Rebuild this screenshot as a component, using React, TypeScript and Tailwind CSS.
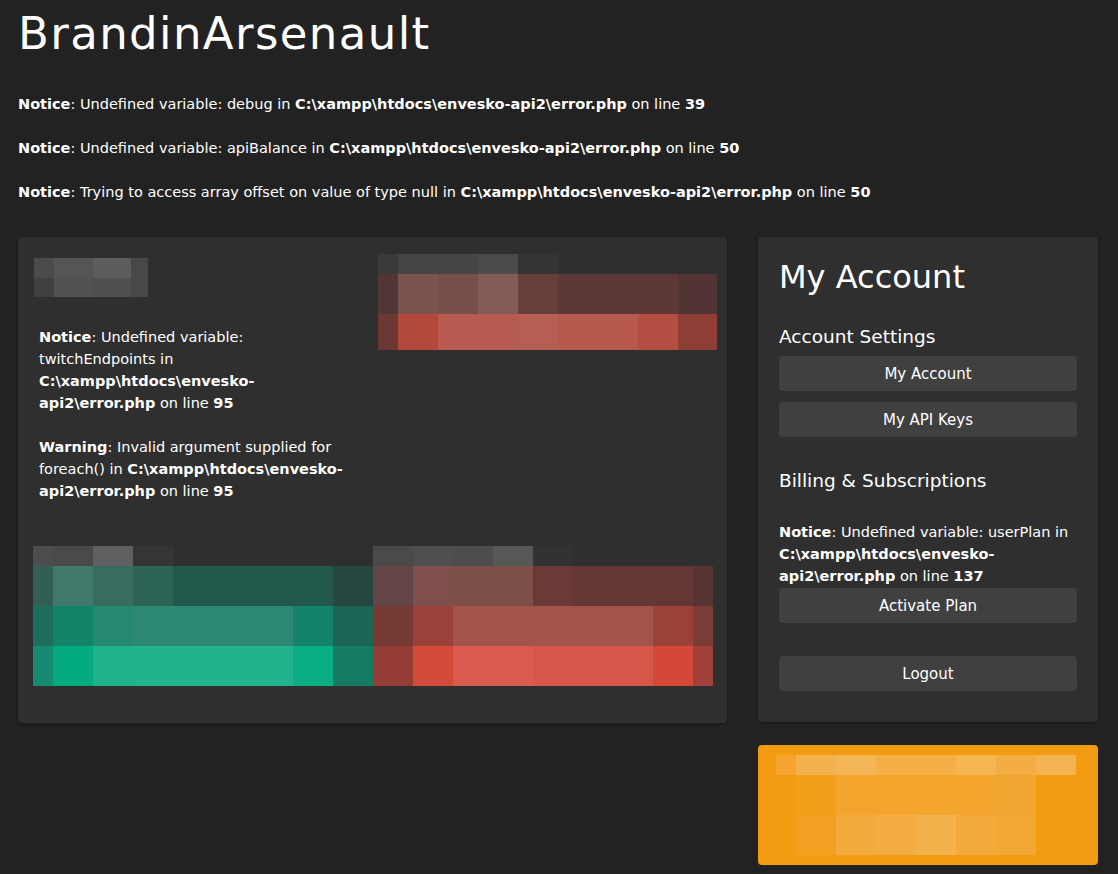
import React from "react";

type Cell = [string, string];
type Row = { h: string; cells: Cell[] };

const PATH = "C:\\xampp\\htdocs\\envesko-api2\\error.php";

// pixelated (redacted) blocks, 20/40px cells
const avatarBlur: Row[] = [
  { h: "h-[20px]", cells: [["w-[20px]", "bg-[#4b4b4b]"], ["w-[39px]", "bg-[#555555]"], ["w-[38px]", "bg-[#5c5c5c]"], ["w-[17px]", "bg-[#484848]"]] },
  { h: "h-[19px]", cells: [["w-[20px]", "bg-[#404040]"], ["w-[39px]", "bg-[#525252]"], ["w-[38px]", "bg-[#505050]"], ["w-[17px]", "bg-[#484848]"]] },
];

const topBlur: Row[] = [
  {
    h: "h-[20px]",
    cells: [
      ["w-[20px]", "bg-[#3a3a3a]"], ["w-[40px]", "bg-[#454545]"], ["w-[40px]", "bg-[#454545]"],
      ["w-[40px]", "bg-[#4b4b4b]"], ["w-[40px]", "bg-[#343434]"], ["w-[159px]", "bg-transparent"],
    ],
  },
  {
    h: "h-[40px]",
    cells: [
      ["w-[20px]", "bg-[#503735]"], ["w-[40px]", "bg-[#7b534d]"], ["w-[40px]", "bg-[#774f49]"],
      ["w-[40px]", "bg-[#835c58]"], ["w-[40px]", "bg-[#663f3b]"], ["w-[40px]", "bg-[#5e3836]"],
      ["w-[40px]", "bg-[#5e3836]"], ["w-[40px]", "bg-[#5e3836]"], ["w-[39px]", "bg-[#513433]"],
    ],
  },
  {
    h: "h-[36px]",
    cells: [
      ["w-[20px]", "bg-[#6d3834]"], ["w-[40px]", "bg-[#b4473b]"], ["w-[40px]", "bg-[#b85a4f]"],
      ["w-[40px]", "bg-[#b75b50]"], ["w-[40px]", "bg-[#b75e53]"], ["w-[40px]", "bg-[#b8594d]"],
      ["w-[40px]", "bg-[#b8594d]"], ["w-[40px]", "bg-[#b44e42]"], ["w-[39px]", "bg-[#8f3e36]"],
    ],
  },
];

const statsBlur: Row[] = [
  {
    h: "h-[20px]",
    cells: [
      ["w-[20px]", "bg-[#4d4d4f]"], ["w-[40px]", "bg-[#4a4a4a]"], ["w-[40px]", "bg-[#606062]"],
      ["w-[40px]", "bg-[#353535]"], ["w-[200px]", "bg-transparent"],
      ["w-[40px]", "bg-[#4a4a48]"], ["w-[40px]", "bg-[#4f4f4f]"], ["w-[40px]", "bg-[#4e4c4c]"],
      ["w-[40px]", "bg-[#565856]"], ["w-[40px]", "bg-[#323232]"], ["w-[140px]", "bg-transparent"],
    ],
  },
  {
    h: "h-[40px]",
    cells: [
      ["w-[20px]", "bg-[#335e55]"], ["w-[40px]", "bg-[#417a6c]"], ["w-[40px]", "bg-[#386c5f]"],
      ["w-[40px]", "bg-[#2e6456]"], ["w-[160px]", "bg-[#21584b]"], ["w-[40px]", "bg-[#26473f]"],
      ["w-[40px]", "bg-[#634645]"], ["w-[40px]", "bg-[#7f4f4b]"], ["w-[80px]", "bg-[#7c4f49]"],
      ["w-[40px]", "bg-[#693a36]"], ["w-[120px]", "bg-[#633733]"], ["w-[20px]", "bg-[#563431]"],
    ],
  },
  {
    h: "h-[40px]",
    cells: [
      ["w-[20px]", "bg-[#1d6e5a]"], ["w-[40px]", "bg-[#148469]"], ["w-[40px]", "bg-[#25886f]"],
      ["w-[160px]", "bg-[#2c8873]"], ["w-[40px]", "bg-[#13846a]"], ["w-[40px]", "bg-[#1c6454]"],
      ["w-[40px]", "bg-[#763a35]"], ["w-[40px]", "bg-[#9b4139]"], ["w-[200px]", "bg-[#a4534b]"],
      ["w-[40px]", "bg-[#9c4138]"], ["w-[20px]", "bg-[#7d3d37]"],
    ],
  },
  {
    h: "h-[40px]",
    cells: [
      ["w-[20px]", "bg-[#148b70]"], ["w-[40px]", "bg-[#05ab80]"], ["w-[40px]", "bg-[#1fb28b]"],
      ["w-[160px]", "bg-[#20b38c]"], ["w-[40px]", "bg-[#0aae82]"], ["w-[40px]", "bg-[#167b63]"],
      ["w-[40px]", "bg-[#933d35]"], ["w-[40px]", "bg-[#d34b3b]"], ["w-[80px]", "bg-[#da5c50]"],
      ["w-[120px]", "bg-[#d6574a]"], ["w-[40px]", "bg-[#d54838]"], ["w-[20px]", "bg-[#a1403a]"],
    ],
  },
];

const promoBlur: Row[] = [
  {
    h: "h-[20px]",
    cells: [
      ["w-[20px]", "bg-[#f5a42e]"], ["w-[40px]", "bg-[#f4b24f]"], ["w-[40px]", "bg-[#f4b556]"],
      ["w-[40px]", "bg-[#f4af47]"], ["w-[40px]", "bg-[#f4af47]"], ["w-[40px]", "bg-[#f5b652]"],
      ["w-[40px]", "bg-[#f4ad42]"], ["w-[40px]", "bg-[#f4b352]"],
    ],
  },
  {
    h: "h-[40px]",
    cells: [
      ["w-[20px]", "bg-transparent"], ["w-[40px]", "bg-[#f29f1a]"], ["w-[40px]", "bg-[#f3a52e]"],
      ["w-[40px]", "bg-[#f3a52e]"], ["w-[40px]", "bg-[#f3a52e]"], ["w-[40px]", "bg-[#f3a52e]"],
      ["w-[40px]", "bg-[#f3a533]"],
    ],
  },
  {
    h: "h-[40px]",
    cells: [
      ["w-[20px]", "bg-transparent"], ["w-[40px]", "bg-[#f2a021]"], ["w-[40px]", "bg-[#f3ac3b]"],
      ["w-[40px]", "bg-[#f3ad40]"], ["w-[40px]", "bg-[#f4b24d]"], ["w-[40px]", "bg-[#f3aa3a]"],
      ["w-[40px]", "bg-[#f3a735]"],
    ],
  },
];

const Mosaic = ({ rows, className = "" }: { rows: Row[]; className?: string }) => (
  <div className={`flex flex-col ${className}`}>
    {rows.map((row, i) => (
      <div key={i} className={`flex ${row.h}`}>
        {row.cells.map(([w, bg], j) => (
          <div key={j} className={`shrink-0 ${w} ${bg}`} />
        ))}
      </div>
    ))}
  </div>
);

const Btn = ({ children }: { children: React.ReactNode }) => (
  <div className="flex h-[35px] w-full items-center justify-center rounded-[4px] bg-[#404040] pt-[2px] text-[15px] text-white">
    {children}
  </div>
);

const App = () => {
  return (
    <div className="min-h-[874px] bg-[#222222] px-[18px] pb-[10px] font-['DejaVu_Sans',sans-serif] text-white">
      <h1 className="pt-[6px] text-[45px] font-normal leading-[56px] tracking-[1.4px]">BrandinArsenault</h1>

      <div className="mt-[31px] flex flex-col gap-[22px] text-[14.5px] leading-[22px]">
        <p className="whitespace-nowrap">
          <b>Notice</b>: Undefined variable: debug in <b>{PATH}</b> on line <b>39</b>
        </p>
        <p className="whitespace-nowrap">
          <b>Notice</b>: Undefined variable: apiBalance in <b>{PATH}</b> on line <b>50</b>
        </p>
        <p className="whitespace-nowrap">
          <b>Notice</b>: Trying to access array offset on value of type null in <b>{PATH}</b> on line <b>50</b>
        </p>
      </div>

      <div className="mt-[34px] flex items-start gap-[31px]">
        {/* main panel */}
        <div className="w-[709px] rounded-[4px] bg-[#2f2f2f] px-[15px] pb-[37px] pt-[17px] shadow-[0_1px_3px_rgba(0,0,0,0.35)]">
          <div className="flex">
            <div className="w-[345px] shrink-0">
              <Mosaic rows={avatarBlur} className="ml-[1px] mt-[4px]" />
              <div className="mt-[29px] whitespace-nowrap pl-[6px] text-[14.5px] leading-[22px]">
                <p>
                  <b>Notice</b>: Undefined variable:
                  <br />
                  twitchEndpoints in
                  <br />
                  <b>C:\xampp\htdocs\envesko-</b>
                  <br />
                  <b>api2\error.php</b> on line <b>95</b>
                </p>
                <p className="mt-[22px]">
                  <b>Warning</b>: Invalid argument supplied for
                  <br />
                  foreach() in <b>C:\xampp\htdocs\envesko-</b>
                  <br />
                  <b>api2\error.php</b> on line <b>95</b>
                </p>
              </div>
            </div>
            <Mosaic rows={topBlur} />
          </div>
          <Mosaic rows={statsBlur} className="mt-[44px]" />
        </div>

        {/* sidebar */}
        <div className="flex w-[340px] flex-col">
          <div className="rounded-[4px] bg-[#2f2f2f] px-[21px] pb-[31px] pt-[20px] shadow-[0_1px_3px_rgba(0,0,0,0.35)]">
            <h2 className="text-[32px] font-normal leading-[40px]">My Account</h2>
            <h3 className="mt-[28px] text-[18.5px] leading-[24px]">Account Settings</h3>
            <div className="mt-[7px] flex flex-col gap-[11px]">
              <Btn>My Account</Btn>
              <Btn>My API Keys</Btn>
            </div>
            <h3 className="mt-[32px] text-[18.5px] leading-[24px]">Billing &amp; Subscriptions</h3>
            <p className="mt-[28px] whitespace-nowrap text-[14.5px] leading-[22px]">
              <b>Notice</b>: Undefined variable: userPlan in
              <br />
              <b>C:\xampp\htdocs\envesko-</b>
              <br />
              <b>api2\error.php</b> on line <b>137</b>
            </p>
            <div className="mt-[1px]">
              <Btn>Activate Plan</Btn>
            </div>
            <div className="mt-[33px]">
              <Btn>Logout</Btn>
            </div>
          </div>

          <div className="mt-[23px] h-[120px] rounded-[4px] bg-[#f39c12] px-[18px] pt-[10px]">
            <Mosaic rows={promoBlur} />
          </div>
        </div>
      </div>
    </div>
  );
};

export default App;
